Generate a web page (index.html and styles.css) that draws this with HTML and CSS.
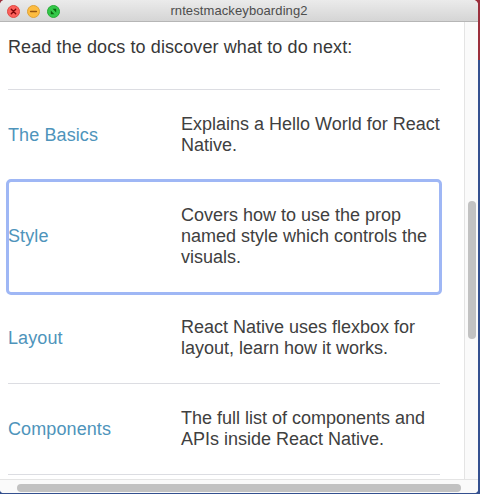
FILE: index.html
```html
<!DOCTYPE html>
<html>
<head>
<meta charset="utf-8">
<link rel="stylesheet" href="styles.css">
</head>
<body>
<div class="window">
  <div class="titlebar">
    <div class="lights">
      <svg class="light" width="13" height="13" viewBox="0 0 13 13">
        <circle cx="6.5" cy="6.5" r="6" fill="#fc605b" stroke="#de4a44" stroke-width="1"/>
        <path d="M4.3 4.3 L8.7 8.7 M8.7 4.3 L4.3 8.7" stroke="#7e0508" stroke-width="1.4" stroke-linecap="round"/>
      </svg>
      <svg class="light" width="13" height="13" viewBox="0 0 13 13">
        <circle cx="6.5" cy="6.5" r="6" fill="#fdbc40" stroke="#dea236" stroke-width="1"/>
        <path d="M3.6 6.5 L9.4 6.5" stroke="#985712" stroke-width="1.4" stroke-linecap="round"/>
      </svg>
      <svg class="light" width="13" height="13" viewBox="0 0 13 13">
        <circle cx="6.5" cy="6.5" r="6" fill="#34c84a" stroke="#27aa35" stroke-width="1"/>
        <path d="M3.8 9.2 L3.8 5.6 L7.4 9.2 Z M9.2 3.8 L9.2 7.4 L5.6 3.8 Z" fill="#0b650d"/>
      </svg>
    </div>
    <div class="title">rntestmackeyboarding2</div>
  </div>
  <div class="frame">
    <div class="viewport">
      <div class="content">
        <p class="heading">Read the docs to discover what to do next:</p>
        <div class="links">
          <div class="row">
            <span class="link">The Basics</span>
            <span class="desc">Explains a Hello World for React Native.</span>
          </div>
          <div class="row focused">
            <span class="link">Style</span>
            <span class="desc">Covers how to use the prop named style which controls the visuals.</span>
          </div>
          <div class="row">
            <span class="link">Layout</span>
            <span class="desc">React Native uses flexbox for layout, learn how it works.</span>
          </div>
          <div class="row">
            <span class="link">Components</span>
            <span class="desc">The full list of components and APIs inside React Native.</span>
          </div>
        </div>
      </div>
      <div class="vscroll"><div class="vthumb"></div></div>
    </div>
    <div class="hscroll"><div class="hthumb"></div></div>
  </div>
</div>
</body>
</html>
```

FILE: styles.css
```css
html, body {
  margin: 0;
  padding: 0;
}
body {
  width: 480px;
  height: 494px;
  overflow: hidden;
  background: linear-gradient(to bottom, #9b2f3c 0, #9b2f3c 60px, #34508f 60px, #34508f 100%);
  font-family: "Liberation Sans", Arial, sans-serif;
}
.window {
  width: 478px;
  height: 493px;
  background: #fff;
  border-radius: 5px 5px 4px 4px;
  overflow: hidden;
  display: flex;
  flex-direction: column;
}
.titlebar {
  height: 21px;
  flex: none;
  border-bottom: 1px solid #b6b6b6;
  background: linear-gradient(to bottom, #ebebeb, #d5d5d5);
  display: flex;
  align-items: center;
  position: relative;
}
.lights {
  display: flex;
  gap: 7px;
  padding-left: 7px;
  padding-top: 1px;
}
.light {
  display: block;
}
.title {
  position: absolute;
  left: 0;
  right: 0;
  top: 0;
  line-height: 22px;
  text-align: center;
  font-size: 13px;
  color: #4d4d4d;
  letter-spacing: 0.1px;
}
.frame {
  flex: 1;
  display: flex;
  flex-direction: column;
  min-height: 0;
}
.viewport {
  height: 457px;
  flex: none;
  display: flex;
  overflow: hidden;
}
.content {
  width: 464px;
  flex: none;
  overflow: hidden;
}
.heading {
  margin: 15px 0 31px 8px;
  font-size: 18px;
  line-height: 21px;
  color: #383838;
  letter-spacing: 0.1px;
}
.links {
  width: 432px;
  margin-left: 8px;
  border-top: 1px solid #dcdde2;
}
.row {
  display: flex;
  align-items: center;
  padding: 8px 0;
  border-bottom: 1px solid #dcdde2;
  font-size: 18px;
  line-height: 21px;
}
.row.focused {
  outline: 3px solid #9fb7f5;
  outline-offset: -1px;
  border-radius: 3px;
}
.link {
  flex: none;
  width: 173px;
  color: #4e94bb;
  letter-spacing: 0.1px;
}
.desc {
  flex: 1;
  padding: 16px 0;
  margin-right: -4px;
  color: #404040;
}
.vscroll {
  width: 13px;
  flex: none;
  background: #fafafa;
  border-left: 1px solid #e4e4e4;
}
.vthumb {
  width: 8px;
  height: 138px;
  margin-top: 179px;
  margin-left: 3px;
  border-radius: 4px;
  background: #c2c2c2;
}
.hscroll {
  flex: 1;
  background: #fafafa;
  border-top: 1px solid #e4e4e4;
}
.hthumb {
  width: 444px;
  height: 8px;
  margin-top: 4px;
  margin-left: 17px;
  border-radius: 4px;
  background: #c2c2c2;
}
```
